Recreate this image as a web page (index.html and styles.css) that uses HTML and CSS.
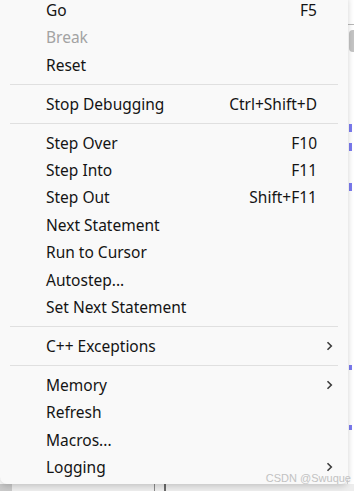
FILE: index.html
```html
<!DOCTYPE html>
<html lang="en">
<head>
    <meta charset="UTF-8">
    <title>Debug Menu</title>
    <link rel="stylesheet" href="styles.css">
</head>
<body>
    <div class="backdrop">
        <div class="edge">
            <span class="edge-line top"></span>
            <span class="edge-knob"></span>
            <span class="edge-link l1"></span>
            <span class="edge-link l2"></span>
            <span class="edge-link l3"></span>
            <span class="edge-link l4"></span>
            <span class="edge-link l5"></span>
        </div>
        <div class="status-bar">
            <span class="status-thumb"></span>
            <span class="status-split"></span>
        </div>
    </div>

    <div class="menu">
        <div class="item"><span class="label">Go</span><span class="key">F5</span><span class="arrow"></span></div>
        <div class="item disabled"><span class="label">Break</span><span class="key"></span><span class="arrow"></span></div>
        <div class="item"><span class="label">Reset</span><span class="key"></span><span class="arrow"></span></div>
        <div class="sep"></div>
        <div class="item"><span class="label">Stop Debugging</span><span class="key">Ctrl+Shift+D</span><span class="arrow"></span></div>
        <div class="sep"></div>
        <div class="item"><span class="label">Step Over</span><span class="key">F10</span><span class="arrow"></span></div>
        <div class="item"><span class="label">Step Into</span><span class="key">F11</span><span class="arrow"></span></div>
        <div class="item"><span class="label">Step Out</span><span class="key">Shift+F11</span><span class="arrow"></span></div>
        <div class="item"><span class="label">Next Statement</span><span class="key"></span><span class="arrow"></span></div>
        <div class="item"><span class="label">Run to Cursor</span><span class="key"></span><span class="arrow"></span></div>
        <div class="item"><span class="label">Autostep...</span><span class="key"></span><span class="arrow"></span></div>
        <div class="item"><span class="label">Set Next Statement</span><span class="key"></span><span class="arrow"></span></div>
        <div class="sep"></div>
        <div class="item"><span class="label">C++ Exceptions</span><span class="key"></span>
            <span class="arrow"><svg width="7" height="10" viewBox="0 0 7 10"><path d="M1.5 1.2 L5.3 5 L1.5 8.8" fill="none" stroke="#3c3c3c" stroke-width="1.6"/></svg></span></div>
        <div class="sep"></div>
        <div class="item"><span class="label">Memory</span><span class="key"></span>
            <span class="arrow"><svg width="7" height="10" viewBox="0 0 7 10"><path d="M1.5 1.2 L5.3 5 L1.5 8.8" fill="none" stroke="#3c3c3c" stroke-width="1.6"/></svg></span></div>
        <div class="item"><span class="label">Refresh</span><span class="key"></span><span class="arrow"></span></div>
        <div class="item"><span class="label">Macros...</span><span class="key"></span><span class="arrow"></span></div>
        <div class="item"><span class="label">Logging</span><span class="key"></span>
            <span class="arrow"><svg width="7" height="10" viewBox="0 0 7 10"><path d="M1.5 1.2 L5.3 5 L1.5 8.8" fill="none" stroke="#3c3c3c" stroke-width="1.6"/></svg></span></div>
    </div>

    <div class="watermark">CSDN @Swuque</div>
</body>
</html>
```

FILE: styles.css
```css
body {
    margin: 0;
    width: 354px;
    height: 491px;
    overflow: hidden;
    background: #ffffff;
    font-family: 'Noto Sans', 'Open Sans', sans-serif;
    position: relative;
}
.backdrop {
    position: absolute;
    inset: 0;
}
.edge {
    position: absolute;
    top: 0;
    right: 0;
    width: 6px;
    height: 484px;
    border-left: 1px solid #dcdcdc;
}
.edge-line {
    position: absolute;
    left: 0;
    right: 0;
    height: 1px;
    background: #b8b8b8;
}
.edge-line.top {
    top: 24px;
}
.edge-knob {
    position: absolute;
    top: 30px;
    left: 1px;
    width: 8px;
    height: 22px;
    border-radius: 4px;
    background: #c4c4c4;
}
.edge-link {
    position: absolute;
    left: 1px;
    width: 3px;
    height: 8px;
    background: #7b7bf0;
}
.edge-link.l1 { top: 124px; }
.edge-link.l2 { top: 143px; }
.edge-link.l3 { top: 183px; }
.edge-link.l4 { top: 365px; height: 5px; }
.edge-link.l5 { top: 425px; height: 5px; }
.status-bar {
    position: absolute;
    left: 0;
    right: 0;
    bottom: 0;
    height: 7px;
    background: #ededed;
}
.status-thumb {
    position: absolute;
    left: 0;
    top: 0;
    width: 12px;
    height: 7px;
    background: #c9c9c9;
}
.status-split {
    position: absolute;
    left: 154px;
    top: 0;
    width: 9px;
    height: 7px;
    border-left: 1px solid #8a8a8a;
    border-right: 2px solid #6a6a6a;
}
.menu {
    position: relative;
    width: 348px;
    height: 488px;
    margin-top: -4px;
    padding-bottom: 3px;
    box-sizing: border-box;
    background: #f9f9f9;
    border-radius: 0 0 7px 7px;
    box-shadow: 0 2px 6px rgba(0, 0, 0, 0.18);
    display: flex;
    flex-direction: column;
    justify-content: flex-end;
}
.item {
    height: 27.5px;
    display: flex;
    align-items: center;
    padding-left: 46px;
    padding-right: 10px;
    font-size: 15.5px;
    color: #141414;
}
.item.disabled {
    color: #a3a3a3;
}
.label {
    flex: 1;
}
.key {
    text-align: right;
}
.arrow {
    width: 21px;
    display: flex;
    justify-content: flex-end;
    padding-right: 5px;
    box-sizing: border-box;
}
.sep {
    height: 11.5px;
    display: flex;
    align-items: center;
    padding: 0 10px;
}
.sep::before {
    content: "";
    flex: 1;
    height: 1px;
    background: #e0e0e0;
}
.watermark {
    position: absolute;
    right: 3px;
    top: 472px;
    font-family: 'Liberation Sans', sans-serif;
    font-size: 11px;
    color: #c2c2c2;
}
```
